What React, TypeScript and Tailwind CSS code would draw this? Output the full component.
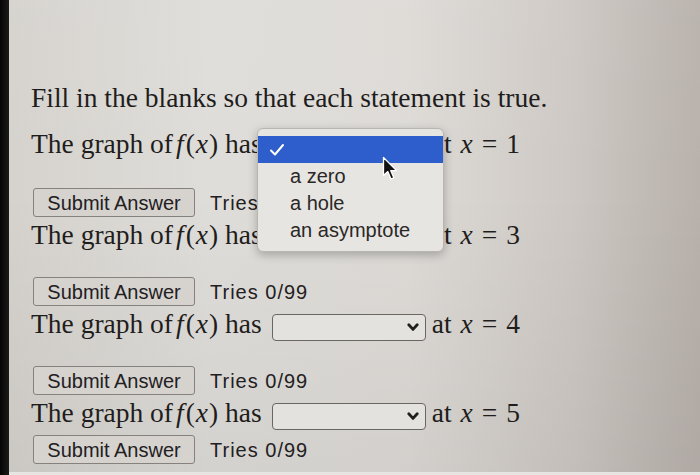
const serif = "font-['Liberation_Serif','Times_New_Roman',serif]";
const sans = "font-['Liberation_Sans',Arial,sans-serif]";

function Chevron() {
  return (
    <svg width="12" height="9" viewBox="0 0 12 9" className="text-[#22201e]">
      <polyline points="1.8,1.8 6,6.4 10.2,1.8" fill="none" stroke="currentColor" strokeWidth="2.8" strokeLinecap="round" strokeLinejoin="round" />
    </svg>
  );
}

function Blank() {
  return (
    <div className="ml-[10px] mr-[6px] mt-[8px] h-[27px] w-[154px] shrink-0 rounded-[4px] border border-[#6a6662] bg-[#e4e2de] flex items-center justify-end pr-[6px]">
      <Chevron />
    </div>
  );
}

function Fx() {
  return (
    <span>
      <i className="ml-[3px] mr-[2px]">f</i>(<i className="mx-[1px]">x</i>)
    </span>
  );
}

function Statement({ at }: { at: number }) {
  return (
    <div className={`${serif} flex items-start h-[36px] text-[27.5px] leading-[36px] text-[#1f1d1c] whitespace-nowrap`}>
      <span>
        The graph of<Fx /> has
      </span>
      <Blank />
      <span>
        at <i className="ml-[2px]">x</i>
        <span className="mx-[9px]">=</span>
        {at}
      </span>
    </div>
  );
}

function SubmitRow({ className = "" }: { className?: string }) {
  return (
    <div className={`${sans} flex items-center h-[29px] ${className}`}>
      <div className="ml-[2px] h-[29px] w-[162px] rounded-[3px] border border-[#85817d] bg-[#d6d3cf] flex items-center justify-center text-[20px] text-[#22201f]">
        Submit Answer
      </div>
      <span className="ml-[15px] text-[20px] tracking-[1px] text-[#22201f]">Tries 0/99</span>
    </div>
  );
}

function Cursor() {
  return (
    <svg width="16" height="26" viewBox="0 0 16 26" className="absolute left-[382px] top-[156px]">
      <path d="M1.5 1.5 L1.5 19.5 L5.8 15.6 L9 23 L11.8 21.8 L8.7 14.6 L14.5 14.6 Z" fill="#111" stroke="#fff" strokeWidth="1.3" strokeLinejoin="round" />
    </svg>
  );
}

function Popup() {
  return (
    <div className={`${sans} absolute left-[257px] top-[128px] w-[187px] rounded-[6px] border border-[#b9b6b2] bg-[#e7e5e2] py-[7px] shadow-[0_3px_10px_rgba(0,0,0,0.25)]`}>
      <div className="h-[27px] bg-[#2d5ecb] flex items-center pl-[11px]">
        <svg width="16" height="14" viewBox="0 0 16 14">
          <polyline points="2,7.5 6,11.5 14,2" fill="none" stroke="#fff" strokeWidth="2" strokeLinecap="round" strokeLinejoin="round" />
        </svg>
      </div>
      {["a zero", "a hole", "an asymptote"].map((item) => (
        <div key={item} className="h-[27px] pl-[32px] text-[20px] leading-[27px] text-[#2a2826]">
          {item}
        </div>
      ))}
    </div>
  );
}

export default function App() {
  return (
    <div className="relative w-[700px] h-[475px] overflow-hidden flex bg-[linear-gradient(90deg,#d5d2cd_0%,#dfddd9_30%,#dedbd7_58%,#cdc8c3_82%,#b8b1ac_100%)]">
      {/* screen bezel */}
      <div className="w-[9px] shrink-0 bg-[linear-gradient(90deg,#050505,#1c1b1a)]" />
      <div className="relative flex-1 bg-[linear-gradient(180deg,rgba(255,255,255,0.04)_0%,rgba(0,0,0,0)_40%,rgba(0,0,0,0.05)_100%)]">
        <div className="pl-[22px] pt-[80px]">
          <h1 className={`${serif} h-[36px] text-[27.5px] leading-[36px] font-normal text-[#1f1d1c] whitespace-nowrap`}>
            Fill in the blanks so that each statement is true.
          </h1>
          <div className="mt-[10px]">
            <Statement at={1} />
          </div>
          <SubmitRow className="mt-[26px]" />
          <Statement at={3} />
          <SubmitRow className="mt-[24px]" />
          <Statement at={4} />
          <SubmitRow className="mt-[24px]" />
          <Statement at={5} />
          <SubmitRow className="mt-[4px]" />
        </div>
        <div className="absolute left-0 right-0 bottom-0 h-[3px] bg-[#e6e5e2]" />
      </div>
      <Popup />
      <Cursor />
    </div>
  );
}
